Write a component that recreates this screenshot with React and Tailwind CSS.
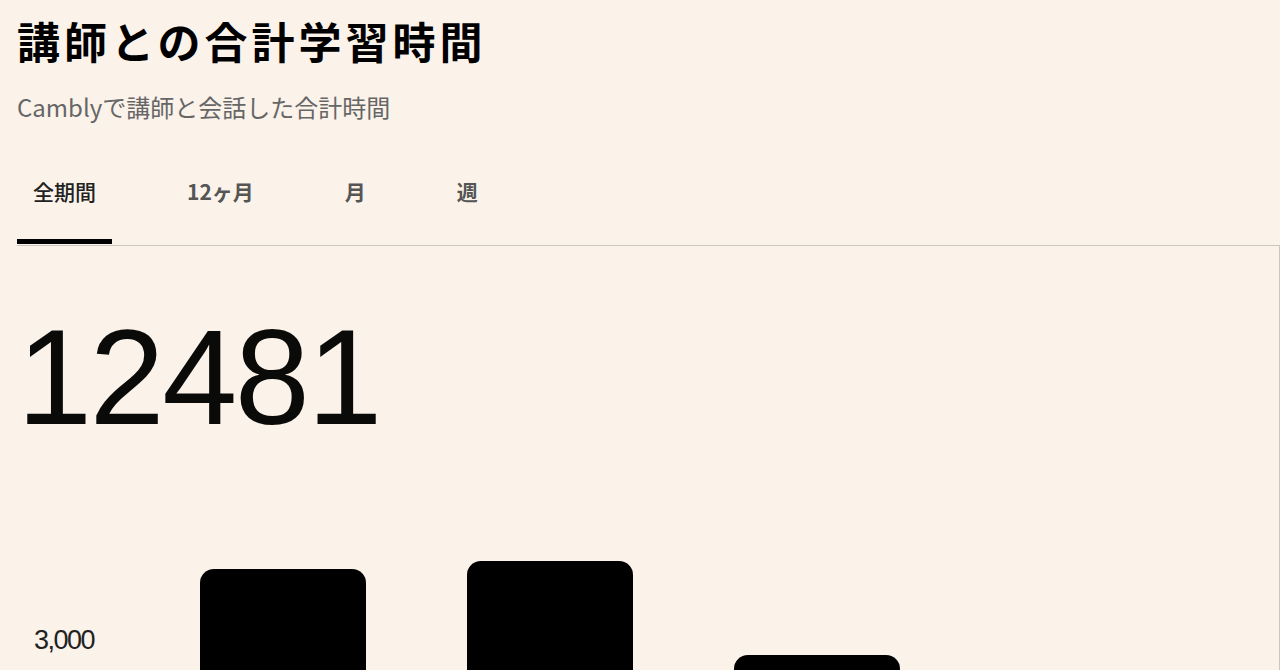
import React, { useState } from "react";

const tabs = ["全期間", "12ヶ月", "月", "週"];
const bars = [171, 179, 85, 0];

export default function App() {
  const [active, setActive] = useState(0);

  return (
    <div
      className="min-h-screen bg-[#fbf2ea] pl-[17px] overflow-hidden"
      style={{ fontFamily: '"Noto Sans CJK JP", "Noto Sans", sans-serif' }}
    >
      <h1 className="pt-[15px] text-[43px] leading-[1.2] font-bold tracking-[4px] text-black">
        講師との合計学習時間
      </h1>
      <p className="mt-[24px] text-[24px] leading-[1.3] text-[#666]">
        Camblyで講師と会話した合計時間
      </p>

      <div className="mt-[42px] flex gap-[59px]">
        {tabs.map((t, i) => (
          <button
            key={t}
            onClick={() => setActive(i)}
            className={
              i === active
                ? "px-4 pt-[14px] pb-[34px] text-[21px] leading-[1.3] font-medium text-[#222] border-b-[5px] border-black"
                : "px-4 pt-[14px] pb-[34px] text-[21px] leading-[1.3] font-bold text-[#555] border-b-[5px] border-transparent"
            }
          >
            {t}
          </button>
        ))}
      </div>

      <div className="mt-px border-t border-r border-[#cbc6c0] h-[600px]">
        <div
          className="mt-[64px] text-[135px] leading-none tracking-[-2.5px] text-[#0a0a08]"
          style={{ fontFamily: '"Liberation Sans", Arial, sans-serif' }}
        >
          12481
        </div>

        <div className="mt-[95px] flex h-[300px]">
          <div className="w-[183px] pt-[87px] pl-[17px]">
            <span
              className="text-[27px] leading-none tracking-[-1.5px] text-[#222]"
              style={{ fontFamily: '"Liberation Sans Narrow", "Liberation Sans", sans-serif' }}
            >
              3,000
            </span>
          </div>
          <div className="flex gap-[101px] items-start">
            {bars.map((h, i) => (
              <div
                key={i}
                className="w-[166px] bg-black rounded-t-[14px]"
                style={{ marginTop: h ? 200 - h : 300, height: h ? h + 100 : 0 }}
              />
            ))}
          </div>
        </div>
      </div>
    </div>
  );
}
